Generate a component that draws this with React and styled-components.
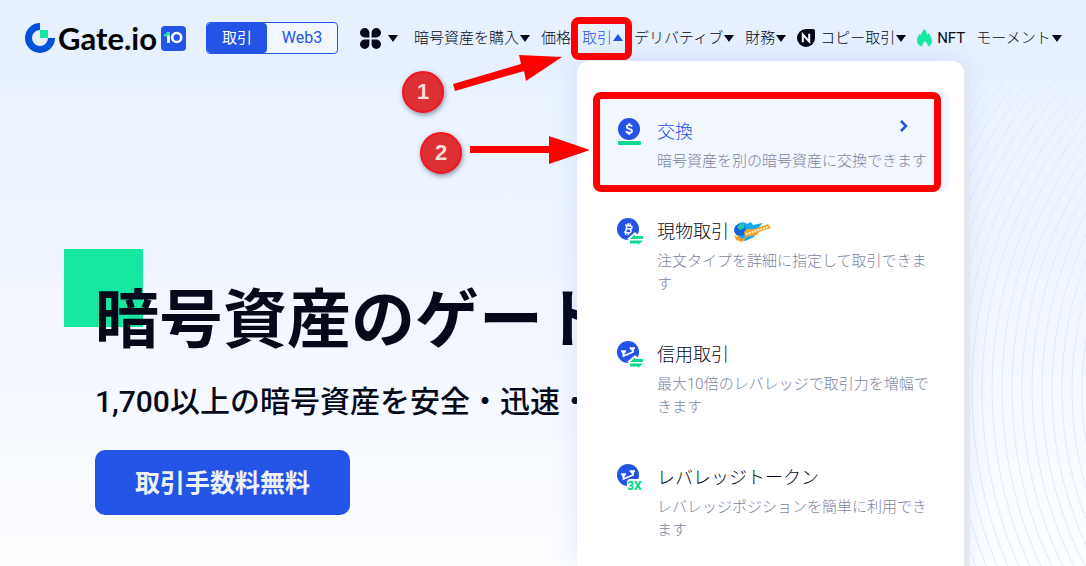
import React, { useState } from 'react';
import styled, { createGlobalStyle } from 'styled-components';

const GlobalStyle = createGlobalStyle`
  * {
    box-sizing: border-box;
  }

  body {
    margin: 0;
    font-family: Roboto, 'Noto Sans CJK JP', sans-serif;
    font-weight: 300;
    color: #05091a;
    background: #fbfcff;
  }

  button {
    font-family: inherit;
    cursor: pointer;
  }
`;

const Page = styled.div`
  position: relative;
  min-height: 100vh;
  overflow: hidden;
  background: linear-gradient(#e6f0ff 0, #e6f0ff 78px, #e9f3ff 79px, #f3f7ff 340px, #fcfdff 566px);
`;

const Waves = styled.svg`
  position: absolute;
  top: 79px;
  right: 0;
  width: 120px;
  height: 487px;
  fill: none;
  stroke: #e0eafc;
  stroke-width: 1;
`;

const TopBar = styled.header`
  position: relative;
  display: flex;
  align-items: center;
  height: 61px;
  padding: 15px 18px 0 25px;
  white-space: nowrap;
`;

const Logo = styled.a`
  display: flex;
  align-items: center;
  color: #000;
  text-decoration: none;
`;

const LogoText = styled.span`
  margin: 0 4px 0 3px;
  font-family: Lato, sans-serif;
  font-size: 31px;
  font-weight: 700;
  line-height: 30px;
`;

const ModeSwitch = styled.div`
  display: flex;
  height: 32px;
  margin-left: 20px;
  border: 1px solid #2354e6;
  border-radius: 4px;
  background: #f2f6ff;
`;

const Mode = styled.button`
  width: ${(props) => (props.$wide ? '70px' : '60px')};
  padding: 0;
  border: none;
  border-radius: 4px;
  font-size: ${(props) => (props.$wide ? '16px' : '15px')};
  font-weight: 400;
  line-height: 30px;
  color: ${(props) => (props.$active ? '#fff' : '#2354e6')};
  background: ${(props) => (props.$active ? '#2354e6' : 'transparent')};
`;

const Nav = styled.nav`
  display: flex;
  align-items: center;
  margin-left: 22px;
`;

const NavItem = styled.a`
  display: flex;
  align-items: center;
  gap: ${(props) => props.$gap || '1px'};
  margin-right: ${(props) => props.$space || '11px'};
  font-size: 15px;
  line-height: 22px;
  color: ${(props) => (props.$active ? '#2354e6' : '#05091a')};
  text-decoration: none;

  svg {
    flex: none;
  }
`;

const NavIcon = styled.span`
  display: flex;
  margin-right: 4px;
`;

const Latin = styled.span`
  font-weight: 400;
`;

const Highlighted = styled.span`
  position: relative;
  display: flex;
`;

const Marker = styled.span`
  position: absolute;
  inset: ${(props) => props.$inset};
  border: 7px solid #f00;
  border-radius: 8px;
  pointer-events: none;
`;

const Menu = styled.div`
  position: absolute;
  top: 61px;
  left: 577px;
  width: 387px;
  min-height: calc(100vh - 61px);
  padding: 30px 15px 0 16px;
  border-radius: 12px 12px 0 0;
  background: #fff;
  box-shadow: 0 0 28px rgba(35, 84, 230, 0.12);

  &::after {
    content: '';
    position: absolute;
    top: 0;
    right: -6px;
    bottom: 0;
    width: 6px;
    border-radius: 6px 6px 0 0;
    background: #e5e8f0;
  }
`;

const MenuItem = styled.a`
  position: relative;
  display: grid;
  grid-template-columns: 28px 1fr;
  column-gap: 12px;
  min-height: 100px;
  padding: 27px 20px 18px 24px;
  border-radius: 8px;
  color: ${(props) => (props.$active ? '#2354e6' : '#05091a')};
  background: ${(props) => (props.$active ? '#f2f6ff' : 'transparent')};
  text-decoration: none;
`;

const ItemTitle = styled.div`
  display: flex;
  align-items: center;
  gap: 4px;
  height: 28px;
  font-size: 18px;
  line-height: 28px;
`;

const ItemText = styled.p`
  margin: 4px 0 0;
  font-size: 15px;
  line-height: 23px;
  color: #7d849e;
`;

const Chevron = styled.svg`
  align-self: flex-start;
  margin: 2px 21px 0 auto;
`;

const Hero = styled.main`
  padding: 188px 0 51px 64px;
  white-space: nowrap;
`;

const HeroInner = styled.div`
  position: relative;
  padding: 32px 0 0 31px;

  &::before {
    content: '';
    position: absolute;
    top: 0;
    left: 0;
    width: 79px;
    height: 78px;
    background: #17e8a1;
  }
`;

const HeroTitle = styled.h1`
  position: relative;
  margin: 0;
  font-size: 64px;
  font-weight: 700;
  line-height: 80px;
`;

const HeroText = styled.p`
  margin: 21px 0 0;
  font-size: 30px;
  font-weight: 500;
  line-height: 40px;
`;

const HeroButton = styled.button`
  width: 255px;
  height: 65px;
  margin-top: 28px;
  padding: 0 0 4px;
  border: none;
  border-radius: 10px;
  font-size: 25px;
  font-weight: 700;
  color: #eef0f5;
  background: #2354e6;
`;

const Step = styled.span`
  position: absolute;
  top: ${(props) => props.$top};
  left: ${(props) => props.$left};
  width: 42px;
  height: 42px;
  border: 2px solid #f5141c;
  border-radius: 50%;
  font-family: 'Liberation Sans', sans-serif;
  font-size: 22px;
  font-weight: 700;
  line-height: 38px;
  text-align: center;
  color: #f9dcdc;
  background: #dc3035;
  box-shadow: 1px 2px 5px rgba(40, 50, 80, 0.5);
`;

const Arrows = styled.svg`
  position: absolute;
  top: 50px;
  left: 450px;
  width: 150px;
  height: 120px;
  fill: #f00;
  pointer-events: none;
`;

const Caret = ({ up }) => (
  <svg width="10" height="8" viewBox="0 0 10 8" fill="currentColor">
    <path d={up ? 'M5 0L10 7H0Z' : 'M0 1H10L5 8Z'} />
  </svg>
);

const LogoMark = () => (
  <svg width="30" height="30" viewBox="0 0 30 30">
    <path d="M15 0A15 15 0 1 0 30 15H23A8 8 0 1 1 15 7Z" fill="#0052d9" />
    <path d="M15 7h8v8h-8z" fill="#17e8a1" />
  </svg>
);

const TenBadge = () => (
  <svg width="25" height="25" viewBox="0 0 25 25">
    <rect width="25" height="25" rx="4" fill="#2354e6" />
    <path d="M7.500 8V17" stroke="#fff" strokeWidth="2.800" />
    <path d="M3 8H5.500V6H9V9.500H5.500V10.500H3Z" fill="#17e8a1" />
    <circle cx="15.700" cy="11.500" r="4.500" fill="none" stroke="#fff" strokeWidth="2.600" />
  </svg>
);

const AppsIcon = () => (
  <svg width="21" height="21" viewBox="0 0 21 21" fill="#05091a">
    <path d="M4.700 0a4.700 4.700 0 0 1 4.700 4.700v4.700H4.700a4.700 4.700 0 0 1 0-9.400z" />
    <path d="M16.300 0a4.700 4.700 0 0 1 0 9.400h-4.700V4.700A4.700 4.700 0 0 1 16.300 0z" />
    <path d="M4.700 11.600h4.700v4.700a4.700 4.700 0 1 1-4.700-4.700z" />
    <path d="M11.600 11.600h4.700a4.700 4.700 0 1 1-4.700 4.700z" />
  </svg>
);

const CopyIcon = () => (
  <svg width="18" height="18" viewBox="0 0 18 18">
    <path d="M9 0H16Q18 0 18 2V9A9 9 0 1 1 9 0Z" fill="#05091a" />
    <path d="M5.800 13.200V5.500L12.200 12.500V4.800" fill="none" stroke="#fff" strokeWidth="2" />
  </svg>
);

const FlameIcon = () => (
  <svg width="15" height="18" viewBox="0 0 15 18" fill="#17e8a1">
    <path d="M6.500 0C8.500 1 10 3 10 6L11.500 4C13.500 7 15 9 15 12C15 15 13 17 11 17.500C11 15 9.500 14 8 12C6.500 14 5 15 5.500 17.500C2 17 0 14.500 0 11.500C0 9 1 7 2.500 5L3.500 6.500C4 4 6 3 6.500 0Z" />
  </svg>
);

const SwapArrows = () => (
  <g>
    <path d="M10 21L18 14L20 16H28V28H12V22Z" fill="#fff" />
    <path d="M13 21L18 16.500V18H26V21ZM13 22.500H26L21 27V25.500H13Z" fill="#0bd990" />
  </g>
);

const ScalePath = () => (
  <g>
    <path d="M6.500 10V15L16 11V7" fill="none" stroke="#fff" strokeWidth="1.800" />
    <path d="M4 10H9M12.500 7H18M5 10.500L6.500 12.500L8.500 10.500M13.500 7.500L15.500 9.500L17 7.500" fill="none" stroke="#fff" strokeWidth="1.400" />
  </g>
);

const ItemIcon = ({ type }) => (
  <svg width="28" height="28" viewBox="0 0 28 28">
    <circle cx={type === 'swap' ? 12 : 11} cy="11" r="11" fill="#2354e6" />
    {type === 'swap' && (
      <>
        <path d="M15 8.500C14.500 6.500 9.700 6.500 9.700 9C9.700 11.300 15 10.500 15 13.200C15 15.500 9.700 15.500 9.300 13M12.300 5V7.500M12.300 14.500V17" fill="none" stroke="#fff" strokeWidth="1.800" />
        <rect x="1" y="23" width="23" height="4" rx="1" fill="#0bd990" />
      </>
    )}
    {type === 'spot' && (
      <>
        <path d="M8 7L14 8C16 9 15 11 12.500 11L9 10.500M12.500 11C15 11.500 14.500 15 12 15L7 14M10 7L8.500 15M11.500 5L11 7.500M13.500 5.500L13 7.500M9 14.500L8.500 17M11.500 15L11 17" fill="none" stroke="#fff" strokeWidth="1.400" />
        <SwapArrows />
      </>
    )}
    {type === 'margin' && (
      <>
        <ScalePath />
        <SwapArrows />
      </>
    )}
    {type === 'token' && (
      <>
        <ScalePath />
        <path d="M10 17L12 15H27V28H10Z" fill="#fff" />
        <text x="10" y="26" fontFamily="Roboto, sans-serif" fontSize="12" fontWeight="900" fill="#0bd990">3X</text>
      </>
    )}
  </svg>
);

const EventBadge = () => (
  <svg width="38" height="22" viewBox="0 0 38 22">
    <path d="M3 5C7 0 12 1 14 3L18 1L20 4L30 2L26 6L34 6L24 12L21 16L12 20L5 18Z" fill="#16a9f0" />
    <circle cx="7" cy="9" r="6" fill="#1267d8" />
    <path d="M7 3C10 2 12 4 11 7L7 9L4 6Z" fill="#27c9a0" />
    <path d="M11 11L14 8L21 8L35 3L38 7L26 11L24 14L12 16Z" fill="#f6a52b" />
    <path d="M13 13L35 6" stroke="#fff0cf" strokeWidth="2" strokeDasharray="2 1" />
    <path d="M1 14L4 16L6 14L8 18L14 16L9 21L3 19Z" fill="#f4a127" />
  </svg>
);

const menuItems = [
  { type: 'swap', title: '交換', text: '暗号資産を別の暗号資産に交換できます' },
  { type: 'spot', title: '現物取引', text: '注文タイプを詳細に指定して取引できます', badge: true },
  { type: 'margin', title: '信用取引', text: '最大10倍のレバレッジで取引力を増幅できます' },
  { type: 'token', title: 'レバレッジトークン', text: 'レバレッジポジションを簡単に利用できます' },
];

function App() {
  const [mode, setMode] = useState('trade');

  return (
    <Page>
      <GlobalStyle />
      <Waves viewBox="0 0 120 487">
        {Array.from({ length: 30 }, (_, i) => (
          <circle key={i} cx="456" cy="311" r={310 + i * 10} />
        ))}
      </Waves>
      <TopBar>
        <Logo href="#">
          <LogoMark />
          <LogoText>Gate.io</LogoText>
          <TenBadge />
        </Logo>
        <ModeSwitch>
          <Mode $active={mode === 'trade'} onClick={() => setMode('trade')}>取引</Mode>
          <Mode $wide $active={mode === 'web3'} onClick={() => setMode('web3')}>Web3</Mode>
        </ModeSwitch>
        <Nav>
          <NavItem href="#" $gap="7px" $space="16px">
            <AppsIcon />
            <Caret />
          </NavItem>
          <NavItem href="#">暗号資産を購入<Caret /></NavItem>
          <NavItem href="#">価格</NavItem>
          <Highlighted>
            <NavItem href="#" $active>取引<Caret up /></NavItem>
            <Marker $inset="-10px 2px -11px -11px" />
          </Highlighted>
          <NavItem href="#">デリバティブ<Caret /></NavItem>
          <NavItem href="#">財務<Caret /></NavItem>
          <NavItem href="#"><NavIcon><CopyIcon /></NavIcon>コピー取引<Caret /></NavItem>
          <NavItem href="#"><NavIcon><FlameIcon /></NavIcon><Latin>NFT</Latin></NavItem>
          <NavItem href="#" $space="0">モーメント<Caret /></NavItem>
        </Nav>
      </TopBar>
      <Hero>
        <HeroInner>
          <HeroTitle>暗号資産のゲート</HeroTitle>
          <HeroText>1,700以上の暗号資産を安全・迅速・</HeroText>
          <HeroButton>取引手数料無料</HeroButton>
        </HeroInner>
      </Hero>
      <Menu>
        {menuItems.map((item, index) => (
          <MenuItem key={item.type} href="#" $active={index === 0}>
            <ItemIcon type={item.type} />
            <div>
              <ItemTitle>
                {item.title}
                {item.badge && <EventBadge />}
                {index === 0 && (
                  <Chevron width="8" height="12" viewBox="0 0 8 12" fill="none" stroke="#2354e6" strokeWidth="2.500">
                    <path d="M1 1L6 6L1 11" />
                  </Chevron>
                )}
              </ItemTitle>
              <ItemText>{item.text}</ItemText>
            </div>
            {index === 0 && <Marker $inset="1px 8px -1px 0" />}
          </MenuItem>
        ))}
      </Menu>
      <Step $top="71px" $left="402px">1</Step>
      <Step $top="132px" $left="420px">2</Step>
      <Arrows viewBox="0 0 150 120">
        <path d="M3 34L71 14L69 5L112 7L76 31L74 21L5 41Z" />
        <path d="M20 96H99V86L140 100L99 114V103H20Z" />
      </Arrows>
    </Page>
  );
}

export default App;
